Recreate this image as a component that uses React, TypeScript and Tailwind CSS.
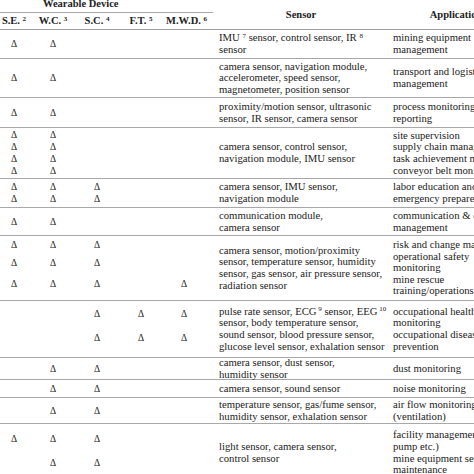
import React from "react";

type DLine = { m: number[]; cls?: string };
type Row = {
  h: string;
  dcls: string;
  d: DLine[];
  s: React.ReactNode[];
  a: React.ReactNode[];
  last?: boolean;
};

const Sup = ({ children }: { children: React.ReactNode }) => (
  <span className="text-[7px] relative -top-[3.5px] leading-none">{children}</span>
);

const colW = ["w-[28px]", "w-[50px]", "w-[38px]", "w-[50px]", "w-[36px]"];

const rows: Row[] = [
  {
    h: "h-[29px]",
    dcls: "justify-center",
    d: [{ m: [1, 1, 0, 0, 0] }],
    s: [
      <>IMU <Sup>7</Sup> sensor, control sensor, IR <Sup>8</Sup></>,
      "sensor",
    ],
    a: ["mining equipment", "management"],
  },
  {
    h: "h-[39px]",
    dcls: "justify-center",
    d: [{ m: [1, 1, 0, 0, 0] }],
    s: [
      "camera sensor, navigation module,",
      "accelerometer, speed sensor,",
      "magnetometer, position sensor",
    ],
    a: ["transport and logistics", "management"],
  },
  {
    h: "h-[30px]",
    dcls: "justify-center",
    d: [{ m: [1, 1, 0, 0, 0] }],
    s: ["proximity/motion sensor, ultrasonic", "sensor, IR sensor, camera sensor"],
    a: ["process monitoring &", "reporting"],
  },
  {
    h: "h-[51px]",
    dcls: "justify-center",
    d: [
      { m: [1, 1, 0, 0, 0] },
      { m: [1, 1, 0, 0, 0] },
      { m: [1, 1, 0, 0, 0] },
      { m: [1, 1, 0, 0, 0] },
    ],
    s: ["camera sensor, control sensor,", "navigation module, IMU sensor"],
    a: [
      "site supervision",
      "supply chain management",
      "task achievement monitoring",
      "conveyor belt monitoring",
    ],
  },
  {
    h: "h-[29px]",
    dcls: "justify-center",
    d: [{ m: [1, 1, 1, 0, 0] }, { m: [1, 1, 1, 0, 0] }],
    s: ["camera sensor, IMU sensor,", "navigation module"],
    a: ["labor education and", "emergency preparedness"],
  },
  {
    h: "h-[28px]",
    dcls: "justify-center",
    d: [{ m: [1, 1, 0, 0, 0] }],
    s: ["communication module,", "camera sensor"],
    a: ["communication & data", "management"],
  },
  {
    h: "h-[65px]",
    dcls: "justify-start pt-[3px]",
    d: [
      { m: [1, 1, 1, 0, 0] },
      { m: [1, 1, 1, 0, 0], cls: "mt-[6px]" },
      { m: [1, 1, 1, 0, 1], cls: "mt-[9px]" },
    ],
    s: [
      "camera sensor, motion/proximity",
      "sensor, temperature sensor, humidity",
      "sensor, gas sensor, air pressure sensor,",
      "radiation sensor",
    ],
    a: [
      "risk and change management",
      "operational safety",
      "monitoring",
      "mine rescue",
      "training/operations",
    ],
  },
  {
    h: "h-[57px]",
    dcls: "justify-start pt-[7px]",
    d: [{ m: [0, 0, 1, 1, 1] }, { m: [0, 0, 1, 1, 1], cls: "mt-[12px]" }],
    s: [
      <>pulse rate sensor, ECG<Sup> 9</Sup> sensor, EEG<Sup> 10</Sup></>,
      "sensor, body temperature sensor,",
      "sound sensor, blood pressure sensor,",
      "glucose level sensor, exhalation sensor",
    ],
    a: [
      "occupational health",
      "monitoring",
      "occupational disease",
      "prevention",
    ],
  },
  {
    h: "h-[22px]",
    dcls: "justify-center",
    d: [{ m: [0, 1, 1, 0, 0] }],
    s: ["camera sensor, dust sensor,", "humidity sensor"],
    a: ["dust monitoring"],
  },
  {
    h: "h-[18px]",
    dcls: "justify-center",
    d: [{ m: [0, 1, 1, 0, 0] }],
    s: ["camera sensor, sound sensor"],
    a: ["noise monitoring"],
  },
  {
    h: "h-[26px]",
    dcls: "justify-center",
    d: [{ m: [0, 1, 1, 0, 0] }],
    s: ["temperature sensor, gas/fume sensor,", "humidity sensor, exhalation sensor"],
    a: ["air flow monitoring", "(ventilation)"],
  },
  {
    h: "h-[57px]",
    dcls: "justify-start pt-[9px]",
    d: [{ m: [1, 1, 1, 0, 0] }, { m: [0, 1, 1, 0, 0], cls: "mt-[12px]" }],
    s: ["light sensor, camera sensor,", "control sensor"],
    a: [
      "facility management (water",
      "pump etc.)",
      "mine equipment service &",
      "maintenance",
    ],
    last: true,
  },
];

const heads: React.ReactNode[] = [
  <>S.E. <Sup>2</Sup></>,
  <>W.C. <Sup>3</Sup></>,
  <>S.C. <Sup>4</Sup></>,
  <>F.T. <Sup>5</Sup></>,
  <>M.W.D. <Sup>6</Sup></>,
];

export default function App() {
  return (
    <div
      className="w-[474px] h-[474px] overflow-hidden bg-white text-[#222] text-[10.7px]"
      style={{ fontFamily: '"Liberation Serif", "Times New Roman", serif' }}
    >
      <div className="w-[540px] flex flex-col">
        {/* header */}
        <div className="flex h-[30px] border-b-[1.5px] border-[#9c9c9c] text-[10.5px]">
          <div className="w-[213px] flex flex-col">
            <div className="h-[13px] border-b-[1.5px] border-[#a8a8a8] flex items-start pl-[43px]">
              <span className="font-bold leading-[7px]">Wearable Device</span>
            </div>
            <div className="flex flex-1 items-center font-bold">
              {heads.map((h, i) => (
                <div key={i} className={`${colW[i]} text-center leading-[12px] whitespace-nowrap`}>
                  {h}
                </div>
              ))}
            </div>
          </div>
          <div className="w-[176px] flex items-center justify-center font-bold">Sensor</div>
          <div className="w-[134px] flex items-center justify-center font-bold">
            Application
          </div>
        </div>
        {rows.map((r, ri) => (
          <div
            key={ri}
            className={`flex ${r.h} ${r.last ? "" : "border-b-[1.5px] border-[#a8a8a8]"}`}
          >
            <div className={`w-[213px] flex flex-col ${r.dcls}`}>
              {r.d.map((l, li) => (
                <div key={li} className={`flex h-[12px] leading-[12px] ${l.cls ?? ""}`}>
                  {l.m.map((v, ci) => (
                    <div key={ci} className={`${colW[ci]} text-center text-[9.5px]`}>
                      {v ? "Δ" : ""}
                    </div>
                  ))}
                </div>
              ))}
            </div>
            <div className="w-[180px] flex flex-col justify-center pl-[6px] leading-[11.6px] whitespace-nowrap">
              {r.s.map((t, i) => (
                <div key={i}>{t}</div>
              ))}
            </div>
            <div className="flex-1 flex flex-col justify-center leading-[11.6px] whitespace-nowrap">
              {r.a.map((t, i) => (
                <div key={i}>{t}</div>
              ))}
            </div>
          </div>
        ))}
      </div>
    </div>
  );
}
